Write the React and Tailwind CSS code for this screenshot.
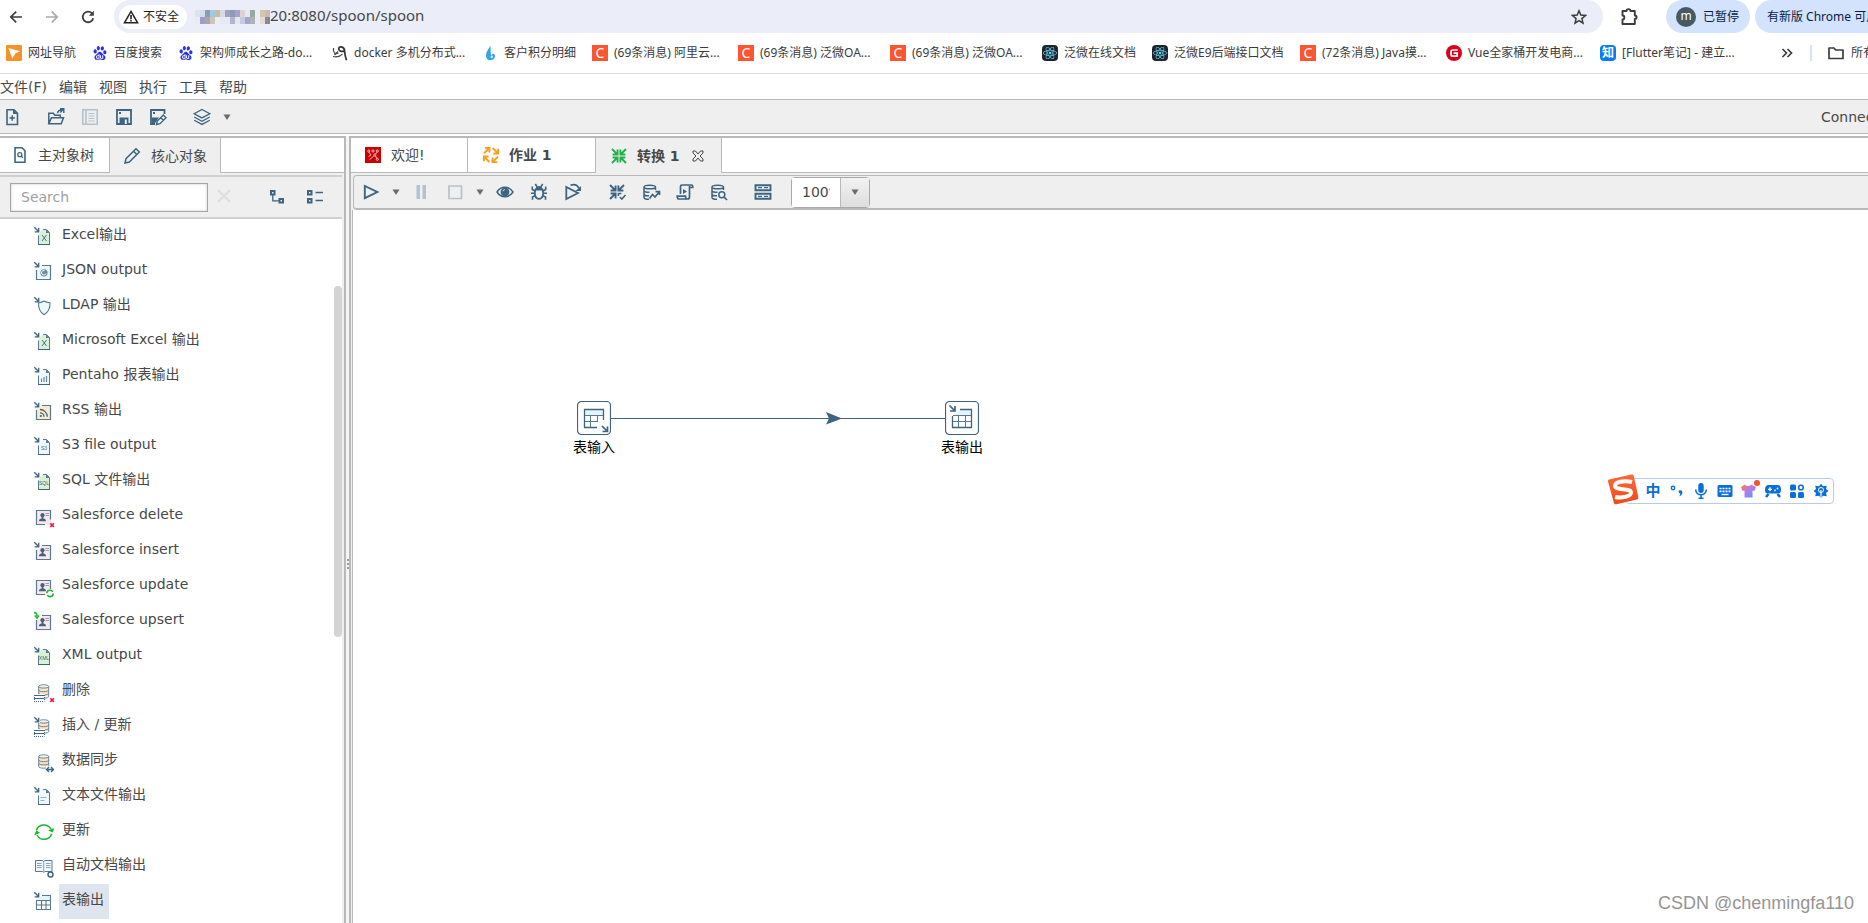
import React from "react";
import { FaReact } from "react-icons/fa";
import { SiBaidu } from "react-icons/si";

const INK = "#3d6480";

/* ---------- browser chrome icons ---------- */

function Svg({ size = 20, box, children, className = "" }) {
  const b = box || size;
  return (
    <svg width={size} height={size} viewBox={`0 0 ${b} ${b}`} fill="none" className={`shrink-0 ${className}`} aria-hidden="true">
      {children}
    </svg>
  );
}

const BackIcon = ({ color = "#3c3c3c", flip }) => (
  <Svg size={16}>
    <g transform={flip ? "translate(16 0) scale(-1 1)" : undefined}>
      <path d="M14 8H3M8.2 2.6 2.8 8l5.4 5.4" stroke={color} strokeWidth="1.7" />
    </g>
  </Svg>
);

const ReloadIcon = () => (
  <Svg size={16}>
    <path d="M13.2 9.2A5.3 5.3 0 1 1 12 4.4" stroke="#3c3c3c" strokeWidth="1.8" />
    <path d="M13.8 1.8v5h-5z" fill="#3c3c3c" />
  </Svg>
);

const WarnIcon = () => (
  <Svg size={16}>
    <path d="M8 2.4 14.6 13.8H1.4z" stroke="#222" strokeWidth="1.5" />
    <path d="M8 6v4.3M8 11v1.6" stroke="#222" strokeWidth="1.6" />
  </Svg>
);

const Arrow = ({ className = "" }) => (
  <Svg size={10} className={className}>
    <path d="M1.5 2.5h7L5 8z" fill="#6b6b6b" />
  </Svg>
);

/* ---------- bookmark icons ---------- */

const NavMark = () => (
  <Svg size={16}>
    <rect width="16" height="16" rx="1" fill="#f6922a" />
    <path d="M2.5 3 14 6.2 9.3 8.4 6.2 13.6z" fill="#fff" />
  </Svg>
);
const PawMark = () => <SiBaidu className="size-4 shrink-0 p-px text-[#2a32e0]" aria-hidden="true" />;
const PenguinMark = () => (
  <Svg size={16}>
    <path d="M1.500 3C1 8 3 9.500 6.500 8" stroke="#444" strokeWidth="1.200" />
    <path d="M12.500 5.500C12 1 6.500.8 6.800 4c.2 2.800 4.500 3 5.700 1.500.3 3 .5 6 2 9.700" stroke="#333" strokeWidth="1.700" />
    <path d="M1 11.500c4 .8 7 .3 9.500-2.300M6 6.500 2.500 10" stroke="#444" strokeWidth="1.200" />
  </Svg>
);
const DropMark = () => (
  <Svg size={16}>
    <path d="M8.500.8C6 4.500 3.800 8 4 11c.2 2.800 2 4.200 4.200 4.200C10.800 15.200 13 13.500 13 11S10 8.500 9.300 10.500C8 7 9 4 8.500.8z" fill="#2fa6e6" />
    <circle cx="9.800" cy="11.800" r="1.200" fill="#d5f0ff" />
  </Svg>
);
const Tile = ({ char, className }) => (
  <span className={`flex size-4 shrink-0 items-center justify-center ${className}`}>{char}</span>
);
const CMark = () => <Tile char="C" className="bg-[#fc5531] text-[14px] leading-4 text-white" />;
const ReactMark = () => (
  <span className="flex size-4 shrink-0 items-center justify-center rounded-sm bg-[#20232a] text-[#61dafb]">
    <FaReact size={14} aria-hidden="true" />
  </span>
);
const GMark = () => (
  <Svg size={16}>
    <circle cx="8" cy="8" r="8" fill="#d9001b" />
    <path d="M11.800 5H7a2 2 0 0 0-2 2v2.200a2 2 0 0 0 2 2h4.200V8.100H7.600" stroke="#fff" strokeWidth="1.700" />
  </Svg>
);
const ZhiMark = () => <Tile char="知" className="rounded-sm bg-[#0a7bf5] text-[12px] leading-4 font-bold text-white" />;

const BOOKMARKS = [
  { label: "网址导航", Icon: NavMark, w: "w-[86px]" },
  { label: "百度搜索", Icon: PawMark, w: "w-[86px]" },
  { label: "架构师成长之路-do...", Icon: PawMark, w: "w-[154px]" },
  { label: "docker 多机分布式...", Icon: PenguinMark, w: "w-[150px]" },
  { label: "客户积分明细", Icon: DropMark, w: "w-[110px]" },
  { label: "(69条消息) 阿里云...", Icon: CMark, w: "w-[146px]" },
  { label: "(69条消息) 泛微OA...", Icon: CMark, w: "w-[152px]" },
  { label: "(69条消息) 泛微OA...", Icon: CMark, w: "w-[152px]" },
  { label: "泛微在线文档", Icon: ReactMark, w: "w-[110px]" },
  { label: "泛微E9后端接口文档", Icon: ReactMark, w: "w-[148px]" },
  { label: "(72条消息) Java摸...", Icon: CMark, w: "w-[146px]" },
  { label: "Vue全家桶开发电商...", Icon: GMark, w: "w-[154px]" },
  { label: "[Flutter笔记] - 建立...", Icon: ZhiMark, w: "w-[150px]" },
];

const MOSAIC = [
  ["#dfe2ec", "#e9ebf3"], ["#cfdff2", "#a29dc6"], ["#8f9bab", "#a9a6ad"], ["#9ccbe3", "#cfc5b6"],
  ["#c9bba6", "#eaedf8"], ["#d8dbe2", "#e6e9f3"], ["#a39fc9", "#e6e9f3"], ["#8f9bb2", "#b1b6c8"],
  ["#a7a3cb", "#e4e6f0"], ["#ded3d3", "#c3cce0"], ["#e6e9f3", "#a7a3cb"], ["#9aa7a2", "#aeb2b4"],
  ["#eaedf8", "#eaedf8"], ["#d6c5ab", "#e6dcd4"], ["#c9b9b9", "#8a8798"],
];

/* ---------- application toolbar icons ---------- */

const NewIcon = () => (
  <Svg>
    <path d="M5 2.800h7l3.500 3.500v11.200H5z" stroke={INK} strokeWidth="1.600" />
    <path d="M11 2.500V7h4.500" fill={INK} />
    <path d="M10.200 8.300v5.400M7.500 11h5.400" stroke={INK} strokeWidth="1.500" />
  </Svg>
);
const OpenIcon = () => (
  <Svg>
    <path d="M2.800 16.700V6.300h4.500l1.500 2h5.500v2.500M2.800 16.700l2.700-6h12l-2.300 6z" stroke={INK} strokeWidth="1.500" />
    <path d="M11.500 6.300c0-2 1.500-3.500 5.500-3.600M14 1.800h3.800V6M17.500 2l-3.300 3.500" stroke={INK} strokeWidth="1.400" />
  </Svg>
);
const ListIcon = () => (
  <Svg>
    <path d="M2.800 2.800h14.400v14.400H2.800zM6 3v14" stroke="#b4c2cd" strokeWidth="1.600" />
    <path d="M8.500 6.500h6M8.500 9h6M8.500 11.500h6M8.500 14h6" stroke="#b4c2cd" strokeWidth="1.200" />
  </Svg>
);
const SaveIcon = () => (
  <Svg>
    <path d="M3 3h14v14H3z" stroke={INK} strokeWidth="1.800" />
    <path d="M5.500 10.500h9V17h-9z" fill={INK} />
    <path d="M10.800 12.500h2V17h-2z" fill="#efefef" />
    <path d="M5 5h2v2H5z" fill={INK} />
  </Svg>
);
const SaveAsIcon = () => (
  <Svg>
    <path d="M16.500 7V3H3v14h4" stroke={INK} strokeWidth="1.800" />
    <path d="M5 5h2v2H5zM4 10.500h7L6.500 17H4z" fill={INK} />
    <path d="M8.500 17.500l.8-3.500 6-6 2.700 2.700-6 6zM12.700 10.600l2.600 2.600" stroke={INK} strokeWidth="1.400" />
  </Svg>
);
const LayersIcon = () => (
  <Svg>
    <path d="M10 2.500 17.800 6.700 10 10.900 2.200 6.700zM2.200 10 10 14.200 17.800 10M2.200 13.200 10 17.400l7.800-4.200" stroke={INK} strokeWidth="1.300" />
  </Svg>
);
const PlayIcon = () => (
  <Svg>
    <path d="M3.800 4v12.200L16.300 10z" stroke={INK} strokeWidth="1.900" />
  </Svg>
);
const PauseIcon = () => (
  <Svg>
    <path d="M5.500 3H9v14H5.500zM11.500 3H15v14h-3.500z" fill="#b4c2cd" />
  </Svg>
);
const StopIcon = () => (
  <Svg>
    <path d="M4 4h12.500v12.500H4z" stroke="#b4c2cd" strokeWidth="1.700" />
  </Svg>
);
const EyeIcon = () => (
  <Svg>
    <path d="M2 10c4-6.300 12-6.300 16 0-4 6.300-12 6.300-16 0z" stroke={INK} strokeWidth="1.500" />
    <circle cx="10" cy="10" r="4.400" fill={INK} />
    <path d="M8 9.200a2 2 0 0 1 1.700-1.600" stroke="#efefef" />
  </Svg>
);
const BugIcon = () => (
  <Svg>
    <path d="M6.500 7.500h7c1.500 4 .5 9.300-3.500 9.300S5 11.500 6.500 7.500z" stroke={INK} strokeWidth="1.800" />
    <path d="M6.500 7.500a3.500 3.500 0 0 1 7 0z" fill={INK} />
    <path d="M6.300 2l1.800 2.800M13.700 2l-1.800 2.800M6 9 3.300 7.500V4.500M14 9l2.700-1.500V4.500M5.500 11.200H2M14.500 11.200H18M6 13.800l-2.500 1.200v2.700M14 13.800l2.500 1.200v2.700" stroke={INK} strokeWidth="1.600" />
  </Svg>
);
const ReplayIcon = () => (
  <Svg>
    <path d="M3.300 5v12L15 11z" stroke={INK} strokeWidth="1.800" />
    <path d="M7.500 3.300c4-1.500 7 0 8.300 3" stroke={INK} strokeWidth="1.600" />
    <path d="M18 4v5h-5.500z" fill={INK} />
  </Svg>
);
const InArrows = ({ color, check }) => (
  <Svg>
    <path d="M3 3l5 5M8.600 3.500v5H3.600M17 3l-5 5M11.400 3.500v5h5M3 17l5-5M8.600 16.500v-5H3.600" stroke={color} strokeWidth="1.900" />
    {check ? (
      <path d="M11.400 14v-2.500h3M12.800 15l2 2 3.700-4" stroke={color} strokeWidth="1.600" />
    ) : (
      <path d="M17 17l-5-5M11.400 16.500v-5h5" stroke={color} strokeWidth="1.900" />
    )}
  </Svg>
);
const CycleArrows = () => (
  <Svg>
    {[0, 90, 180, 270].map((a) => (
      <path key={a} transform={`rotate(${a} 10 10)`} d="M3 8.300l4.800-4.800M3.800 2.900h4.700v4.700" stroke="#fa9a1f" strokeWidth="1.900" />
    ))}
  </Svg>
);
const Cyl = () => (
  <path d="M14.500 8V5c0-1-2.500-1.800-5.800-1.800S3 4 3 5v10.500c0 1 2 1.800 5 1.800M3 5c0 1 2.500 1.800 5.700 1.800S14.500 6 14.500 5M3 8.500c0 1 2.500 1.800 5.500 1.800M3 12c0 1 2 1.800 5 1.800" stroke={INK} strokeWidth="1.500" />
);
const ImpactIcon = () => (
  <Svg>
    <Cyl />
    <path d="M8.500 16.500l3-4 2.500 2.500 4-4.700M14.500 9.700h4V13" stroke={INK} strokeWidth="1.700" />
  </Svg>
);
const ScriptIcon = () => (
  <Svg>
    <path d="M5.500 12V4.500c0-1 .5-1.500 1.500-1.500h9.500c1 0 1.300.8 1.300 2.500h-3.300M14.500 4v11c0 1-.6 2-2 2H4c-1.300 0-1.800-1-1.800-2.800h8.300c0 2 .5 2.800 1.800 2.800" stroke={INK} strokeWidth="1.700" />
    <path d="M8 7v5l4-2.500z" fill={INK} />
  </Svg>
);
const ExploreIcon = () => (
  <Svg>
    <Cyl />
    <circle cx="12.800" cy="12.800" r="3" stroke={INK} strokeWidth="1.500" />
    <path d="M15 15l3 3" stroke={INK} strokeWidth="1.700" />
  </Svg>
);
const ResultsIcon = () => (
  <Svg>
    <path d="M2.500 3.200h15v5h-15zM2.500 11.800h15v5h-15z" stroke={INK} strokeWidth="1.900" />
    <path d="M5 5.700h4M11 5.700h4M5 14.300h4M11 14.300h4" stroke={INK} strokeWidth="1.200" />
  </Svg>
);
const TreeFileIcon = () => (
  <Svg>
    <path d="M5 2.800h7l3 3v11.400H5z" stroke={INK} strokeWidth="1.600" />
    <circle cx="9.800" cy="9.700" r="2" stroke={INK} strokeWidth="1.300" />
    <path d="M11.300 11l1.500 1.800" stroke={INK} strokeWidth="1.300" />
  </Svg>
);
const PencilIcon = () => (
  <Svg>
    <path d="M3 17l1-4.300L14 2.700l3.300 3.300-10 10zM11.500 5.200l3.300 3.300" stroke={INK} strokeWidth="1.500" />
  </Svg>
);
const ExpandIcon = () => (
  <Svg>
    <path d="M4 4h3.500v3.500H4zM12.500 12H16v3.500h-3.500z" stroke={INK} strokeWidth="2" />
    <path d="M5.800 8v5.800H12" stroke={INK} strokeWidth="1.300" />
  </Svg>
);
const CollapseIcon = () => (
  <Svg>
    <path d="M3 4h3.500v3.500H3zM3 12h3.500v3.500H3z" stroke={INK} strokeWidth="2" />
    <path d="M10.500 5.500H18M10.500 13.500H18" stroke={INK} strokeWidth="1.500" />
  </Svg>
);
const WelcomeIcon = () => (
  <Svg size={16}>
    <rect width="16" height="16" fill="#cc0000" />
    <g stroke="#fff" strokeWidth=".8" opacity=".9">
      <circle cx="3.800" cy="4" r="1.100" /><circle cx="8" cy="4" r="1.100" /><circle cx="12.300" cy="4" r="1.100" />
      <circle cx="9.800" cy="8" r="1.100" /><circle cx="12.300" cy="12.300" r="1.100" />
      <path d="M12 5.200 10.600 7M8.900 8.800 4.500 12.800M10.500 9l1.200 2.200M4 5.200 6 8l-2.500 1.500" />
    </g>
  </Svg>
);

/* ---------- step icons ---------- */

const InArrow = ({ color = INK }) => (
  <path d="M1.300 1.300l4 4M5.700 1.800v4h-4" stroke={color} strokeWidth="1.300" />
);
const Doc = ({ fill = "#eef8fd" }) => (
  <>
    <path d="M8.500 4h5L17 7.500V19H5V9.500z" fill={fill} />
    <path d="M10 3.500h3.500l3 3v12h-11V9.500" stroke="#58798f" />
    <path d="M5 18.500h12" stroke={INK} />
    <path d="M13 3.500V7h3.500" fill="#58798f" />
  </>
);
const Square = ({ fill = "#eef8fd" }) => (
  <>
    <path d="M9 4.500h9V19H3.500V9z" fill={fill} />
    <path d="M9 4.500h8.500v14h-14V9" stroke="#58798f" strokeWidth="1.200" />
  </>
);
const Person = ({ full }) => (
  <>
    <path d={full ? "M4 5h14v14H4z" : "M9 5h9v14H4V9z"} fill="#fce6ea" />
    <path d={full ? "M12 18.500H3.500v-14h14v9" : "M9 4.500h8.500v14h-14V9"} stroke="#58798f" strokeWidth="1.200" />
    <circle cx="9.500" cy="9.200" r="2.100" fill={INK} />
    <path d="M8.600 10h1.800v2.500c1.600.3 2.600.8 2.600 2.800H6c0-2 1-2.500 2.600-2.800z" fill={INK} />
    <path d="M12.500 7.500h3.500M12.500 9.500h3.500" stroke="#8aa1b3" />
  </>
);
const DocText = ({ children }) => (
  <text x="11" y="13.500" textAnchor="middle" fontSize="5" fontFamily="Liberation Sans, sans-serif" fill={INK}>{children}</text>
);
const RedX = () => <path d="M17.300 17.300l3.600 3.600M20.900 17.300l-3.600 3.600" stroke="#e5193c" strokeWidth="1.600" />;
const MiniCyl = () => (
  <>
    <path d="M6 5.500h9.500v10H6z" fill="#fbe3c0" />
    <path d="M5.700 5.500v10c0 1 2.200 1.700 5 1.700s5-.7 5-1.700v-10M5.700 5.500c0-1 2.200-1.700 5-1.700s5 .7 5 1.700-2.200 1.600-5 1.600-5-.6-5-1.600zM5.700 9c0 1 2.200 1.700 5 1.700s5-.7 5-1.700M5.700 12.200c0 1 2.200 1.700 5 1.700s5-.7 5-1.700" stroke="#6b8599" />
  </>
);
const Rows = () => (
  <>
    <path d="M1 13h11v8H1z" fill="#fff" />
    <path d="M1 14.500h10.500M1 17.500h10.500" stroke={INK} strokeWidth="1.200" />
    <path d="M1.500 14v6M1 20.500h10.500M11.500 14v6" stroke={INK} strokeDasharray="1 1" />
  </>
);
const Grid = () => (
  <>
    <path d="M8 5h9.500v4H4z" fill="#e4f4fb" />
    <path d="M9 4.500h8.500v14h-14V9.500h14M3.500 14h14M8.500 9v9.500M13 9v9.500" stroke="#58798f" strokeWidth="1.100" />
  </>
);

const STEPS = [
  { label: "Excel输出", art: <><InArrow /><Doc fill="#d9f2d6" /><path d="M9 9l4.500 6M13.500 9 9 15" stroke={INK} strokeWidth=".9" /></> },
  { label: "JSON output", art: <><InArrow /><Square /><circle cx="11" cy="11.800" r="3.600" fill={INK} opacity=".75" /><path d="M11.500 9.500a2.300 2.300 0 1 0 1.500 3" stroke="#fff" /></> },
  { label: "LDAP 输出", art: <><InArrow /><path d="M5.500 7C8 6.500 9.500 6 11 5c1.500 1 3.500 1.500 6 1.700.3 5.300-1.500 9.300-6 12-4-2.300-5.600-6-5.500-11.700z" fill="#eef8fd" stroke="#58798f" strokeWidth="1.100" /></> },
  { label: "Microsoft Excel 输出", art: <><InArrow /><Doc fill="#d9f2d6" /><path d="M9 9l4.500 6M13.500 9 9 15" stroke={INK} strokeWidth=".9" /></> },
  { label: "Pentaho 报表输出", art: <><InArrow /><Doc /><path d="M8.500 12.500V16M11 11v5M13.500 10v6" stroke="#6b8ba2" strokeWidth="1.200" /></> },
  { label: "RSS 输出", art: <><InArrow /><Square fill="#fdeacb" /><path d="M7 11.800a4 4 0 0 1 4 4M7 8.500a7.300 7.300 0 0 1 7.300 7.300" stroke={INK} strokeWidth="1.300" /><circle cx="7.800" cy="15" r="1.100" fill={INK} /></> },
  { label: "S3 file output", art: <><InArrow /><Doc /><DocText>S3</DocText></> },
  { label: "SQL 文件输出", art: <><InArrow /><Doc fill="#d9f2d6" /><DocText>SQL</DocText></> },
  { label: "Salesforce delete", art: <><Person full /><RedX /></> },
  { label: "Salesforce insert", art: <><InArrow /><Person /></> },
  { label: "Salesforce update", art: <><Person full /><circle cx="17" cy="17.500" r="4.500" fill="#fff" /><circle cx="17" cy="17.500" r="3.200" stroke="#19b52a" strokeWidth="1.500" strokeDasharray="8 2" /></> },
  { label: "Salesforce upsert", art: <><Person /><path d="M1 1.500c2.500 0 3 1 3 3.500M1.800 4.500 4 7l2-2.500" stroke="#19b52a" strokeWidth="1.500" /></> },
  { label: "XML output", art: <><InArrow /><Doc fill="#d9f2d6" /><DocText>XML</DocText></> },
  { label: "删除", art: <><MiniCyl /><Rows /><RedX /></> },
  { label: "插入 / 更新", art: <><MiniCyl /><path d="M0 0h7v7H0z" fill="#fff" /><InArrow /><Rows /></> },
  { label: "数据同步", art: <><MiniCyl /><path d="M13 15h8v5h-8z" fill="#fff" /><path d="M13.500 18.500h7M16 16l-2.500 2.500L16 21M18 16l2.500 2.500L18 21" stroke={INK} strokeWidth="1.300" /></> },
  { label: "文本文件输出", art: <><InArrow /><Doc /><path d="M7.500 11.500h6M7.500 14.500h4" stroke="#8fb3c9" /></> },
  { label: "更新", art: <><path d="M3.300 9.500a8 8 0 0 1 14.600-1.300M18.700 12.800A8 8 0 0 1 4 14" stroke="#19b52a" strokeWidth="1.500" /><path d="M15 9.500l6-2.500-1 4.500zM7 11.800 1 14.500l2.500-5z" fill="#19b52a" /></> },
  { label: "自动文档输出", art: <><path d="M2.500 4.500h7.200l1 1 1-1h7.300v11h-7.300l-1 1-1-1H2.500z" fill="#eef8fd" stroke="#58798f" /><path d="M10.700 5v11M4 7.500h4.500M4 9.500h4.500M4 11.500h4.500M13 7.500h4.500M13 9.500h4.500M13 11.500h4.500" stroke="#7f9bb0" strokeWidth=".9" /><circle cx="17.500" cy="18.500" r="2.500" fill="#fff" stroke={INK} strokeWidth="1.400" /></> },
  { label: "表输出", art: <><InArrow /><Grid /></>, selected: true },
];

/* ---------- parts ---------- */

function ToolButton({ label, children, className = "", disabled }) {
  return (
    <button type="button" aria-label={label} disabled={disabled} className={`flex shrink-0 items-center justify-center ${className}`}>
      {children}
    </button>
  );
}

function AddressBar() {
  return (
    <div className="flex h-[33px] shrink-0 items-center bg-white">
      <div className="flex w-[114px] shrink-0 items-center gap-5 pl-2">
        <ToolButton label="后退"><BackIcon /></ToolButton>
        <ToolButton label="前进"><BackIcon color="#a9a9a9" flip /></ToolButton>
        <ToolButton label="重新加载"><ReloadIcon /></ToolButton>
      </div>
      <div className="flex h-full min-w-0 flex-1 items-center rounded-2xl bg-[#ebeef8] pr-4 pl-[5px]">
        <button type="button" className="flex h-6 w-[68px] shrink-0 items-center gap-1 rounded-full bg-white pl-1 text-[12px] text-[#1f1f1f]">
          <WarnIcon />不安全
        </button>
        <span className="ml-2 flex h-[14px] shrink-0" aria-hidden="true">
          {MOSAIC.map(([a, b], i) => (
            <span key={i} className="flex w-[5px] flex-col">
              <span className="flex-1" style={{ background: a }} />
              <span className="flex-1" style={{ background: b }} />
            </span>
          ))}
        </span>
        <span className="flex-1 truncate pb-[3px] text-[15px] text-[#46474a]">20:8080/spoon/spoon</span>
        <ToolButton label="为此标签页添加书签">
          <Svg size={16}>
            <path d="M8 1.800l1.800 4.300 4.700.4-3.600 3.100 1.100 4.600L8 11.700l-4 2.500 1.100-4.600L1.500 6.500l4.700-.4z" stroke="#3c3c3c" strokeWidth="1.500" />
          </Svg>
        </ToolButton>
      </div>
      <div className="flex h-full w-[265px] shrink-0 items-center overflow-hidden">
        <ToolButton label="扩展程序" className="ml-4">
          <Svg>
            <path d="M3.500 4h4c0-2.500 4-2.500 4 0h4.300v4.500c2.400 0 2.400 3.500 0 3.500v5H3.500v-4.500c2.500 0 2.500-4 0-4z" stroke="#3c3c3c" strokeWidth="1.900" strokeLinejoin="round" />
          </Svg>
        </ToolButton>
        <span className="ml-[17px] h-4 w-[2px] bg-[#d3e2fd]" />
        <button type="button" className="ml-[10px] flex h-full w-[84px] shrink-0 items-center gap-[7px] rounded-full bg-[#d3e2fd] pl-[10px] text-[12px] text-[#041e49]">
          <span className="flex size-5 items-center justify-center rounded-full bg-[#455a64] pb-px text-[12px] text-white">m</span>
          已暂停
        </button>
        <button type="button" className="ml-[5px] flex h-full w-40 shrink-0 items-center rounded-full bg-[#d3e2fd] pl-3 text-[12px] whitespace-nowrap text-[#041e49]">
          有新版 Chrome 可用
        </button>
      </div>
    </div>
  );
}

function BookmarkBar() {
  return (
    <nav className="flex h-[41px] shrink-0 items-center overflow-hidden border-b border-[#dcdcdc] bg-white pl-[6px] text-[12px] text-[#3b3b3b]">
      {BOOKMARKS.map(({ label, Icon, w }, i) => (
        <a key={i} href="#" className={`flex shrink-0 items-center gap-[6px] whitespace-nowrap ${w}`}>
          <Icon />{label}
        </a>
      ))}
      <div className="flex-1" />
      <div className="flex w-[91px] shrink-0 items-center">
        <ToolButton label="更多书签" className="ml-[2px]">
          <Svg size={16}><path d="M3.500 4l4 4-4 4M8.500 4l4 4-4 4" stroke="#3c3c3c" strokeWidth="1.700" /></Svg>
        </ToolButton>
        <span className="ml-[15px] h-4 w-[2px] shrink-0 bg-[#d3e2fd]" />
        <a href="#" className="ml-4 flex shrink-0 items-center gap-[7px] whitespace-nowrap">
          <Svg size={16}><path d="M1 3h5l1.700 2H15v8.500H1z" stroke="#3c3c3c" strokeWidth="1.700" strokeLinejoin="round" /></Svg>
          所有书签
        </a>
      </div>
    </nav>
  );
}

function MainToolbar() {
  return (
    <div className="flex h-[35px] shrink-0 items-center overflow-hidden border-y border-[#b9b9b9] bg-[#efefef]">
      <ToolButton label="新建" className="ml-[2px]"><NewIcon /></ToolButton>
      <ToolButton label="打开" className="ml-6"><OpenIcon /></ToolButton>
      <ToolButton label="探索资源库" className="ml-[14px]" disabled><ListIcon /></ToolButton>
      <ToolButton label="保存" className="ml-[14px]"><SaveIcon /></ToolButton>
      <ToolButton label="另存为" className="ml-[14px]"><SaveAsIcon /></ToolButton>
      <ToolButton label="视角" className="ml-6"><LayersIcon /></ToolButton>
      <ToolButton label="选择视角" className="ml-[10px]"><Arrow /></ToolButton>
      <div className="flex-1" />
      <span className="w-[47px] shrink-0 whitespace-nowrap">Connect</span>
    </div>
  );
}

function LeftPanel() {
  return (
    <aside className="flex w-[346px] shrink-0 flex-col border-t-2 border-r-2 border-[#b9b9b9] bg-[#efefef]">
      <div className="flex h-[35px] shrink-0" role="tablist">
        <button type="button" role="tab" aria-selected="false" className="flex w-[110px] items-center gap-2 border-r border-b border-[#b9b9b9] bg-white pl-[10px]">
          <TreeFileIcon />主对象树
        </button>
        <button type="button" role="tab" aria-selected="true" className="flex w-[111px] items-center gap-[9px] border-r border-[#b9b9b9] pl-[12px]">
          <PencilIcon />核心对象
        </button>
        <div className="flex-1 border-b border-[#b9b9b9] bg-white" />
      </div>
      <div className="mt-[2px] mr-[2px] flex h-[44px] shrink-0 items-center border-y-2 border-[#d0d0d0] pl-[10px]">
        <input aria-label="Search" placeholder="Search" className="h-[29px] w-[198px] border border-[#a5a5a5] bg-white px-[10px] shadow-[inset_0_0_3px_#ccc] outline-none placeholder:text-[#a0a0a0]" />
        <ToolButton label="清除" className="ml-[6px]">
          <Svg><path d="M4 3l12 12M16 3 4 15" stroke="#dedede" strokeWidth="2" /></Svg>
        </ToolButton>
        <ToolButton label="展开全部" className="ml-[33px]"><ExpandIcon /></ToolButton>
        <ToolButton label="折叠全部" className="ml-[18px]"><CollapseIcon /></ToolButton>
      </div>
      <div className="flex min-h-0 flex-1">
        <ul className="min-w-0 flex-1 overflow-hidden bg-white">
          {STEPS.map(({ label, art, selected }) => (
            <li key={label} className="flex h-[35px] items-start pl-[33px]">
              <Svg size={22} className="mt-[7px]">{art}</Svg>
              <button type="button" className={`ml-1 h-[35px] pr-[5px] pb-[6px] pl-[3px] whitespace-nowrap ${selected ? "bg-[#dee5ee]" : ""}`}>{label}</button>
            </li>
          ))}
        </ul>
        <div className="w-2 shrink-0 bg-white pt-[67px]">
          <div className="h-[351px] rounded-full bg-[#d4d4d4]" />
        </div>
        <div className="w-[2px] shrink-0" />
      </div>
    </aside>
  );
}

function Combo() {
  return (
    <div className="ml-[18px] flex h-[31px] w-[79px] rounded-sm border border-[#a9a9a9]">
      <input aria-label="缩放" defaultValue="100%" className="w-[38px] min-w-0 bg-white pl-[10px] outline-none" />
      <span className="w-[10px] bg-white" />
      <button type="button" aria-label="选择缩放比例" className="flex flex-1 items-center justify-center border-l border-[#b9b9b9] bg-gradient-to-b from-[#f2f2f2] to-[#dedede]"><Arrow /></button>
    </div>
  );
}

function TransToolbar() {
  return (
    <div className="mt-[2px] ml-[2px] flex h-[35px] shrink-0 items-center overflow-hidden rounded-l-sm border-t border-b-2 border-l border-[#b9b9b9]">
      <ToolButton label="运行" className="ml-[7px]"><PlayIcon /></ToolButton>
      <ToolButton label="运行选项" className="ml-[10px]"><Arrow /></ToolButton>
      <ToolButton label="暂停" className="ml-[10px]" disabled><PauseIcon /></ToolButton>
      <ToolButton label="停止" className="ml-[14px]" disabled><StopIcon /></ToolButton>
      <ToolButton label="停止选项" className="ml-[10px]"><Arrow /></ToolButton>
      <ToolButton label="预览" className="ml-[10px]"><EyeIcon /></ToolButton>
      <ToolButton label="调试" className="ml-[14px]"><BugIcon /></ToolButton>
      <ToolButton label="重放" className="ml-[14px]"><ReplayIcon /></ToolButton>
      <ToolButton label="校验" className="ml-6"><InArrows color={INK} check /></ToolButton>
      <ToolButton label="影响分析" className="ml-[14px]"><ImpactIcon /></ToolButton>
      <ToolButton label="SQL" className="ml-[14px]"><ScriptIcon /></ToolButton>
      <ToolButton label="探索数据库" className="ml-[14px]"><ExploreIcon /></ToolButton>
      <ToolButton label="执行结果" className="ml-6"><ResultsIcon /></ToolButton>
      <Combo />
    </div>
  );
}

function Node({ label, out, className }) {
  return (
    <div className={`absolute flex w-[50px] flex-col items-center text-black ${className}`}>
      <svg width="34" height="34" viewBox="0 0 34 34" fill="none" aria-hidden="true">
        <rect x=".5" y=".5" width="33" height="33" rx="4" fill="#fff" stroke={INK} strokeWidth="1.200" />
        {out ? (
          <>
            <path d="M15 9h11v5H9z" fill="#e4f4fb" />
            <path d="M15 8.500h11.500v18h-19V15" stroke={INK} strokeWidth="1.300" />
            <path d="M8 14.500h18M8 20.500h18M13.500 14.500V26M20.500 14.500V26" stroke="#58798f" />
            <path d="M4.500 4.500l5 5M10 5v5H5" stroke={INK} strokeWidth="1.700" />
          </>
        ) : (
          <>
            <path d="M8 9h18v5H8z" fill="#e4f4fb" />
            <path d="M26.500 19V8.500h-19v18H20" stroke={INK} strokeWidth="1.300" />
            <path d="M8 14.500h18M8 20.500h13M13.500 14.500V26M20.500 14.500V21" stroke="#58798f" />
            <path d="M25 25l5 5M30.500 25.500v5h-5" stroke={INK} strokeWidth="1.700" />
          </>
        )}
      </svg>
      <span className="mt-[2px] leading-5">{label}</span>
    </div>
  );
}

function Workspace() {
  return (
    <main className="flex min-w-0 flex-1 flex-col border-t-2 border-l-2 border-[#b9b9b9] bg-[#efefef]">
      <div className="flex h-[35px] shrink-0" role="tablist">
        <button type="button" role="tab" aria-selected="false" className="flex w-[117px] items-center gap-[10px] border-r border-b border-[#b9b9b9] bg-white pl-[14px]">
          <WelcomeIcon />欢迎!
        </button>
        <button type="button" role="tab" aria-selected="false" className="flex w-[128px] items-center gap-2 border-r border-b border-[#b9b9b9] bg-white pl-[13px] font-bold">
          <CycleArrows />作业 1
        </button>
        <div className="flex w-[126px] items-center border-r border-[#b9b9b9] pl-[13px]">
          <button type="button" role="tab" aria-selected="true" className="flex items-center gap-2 font-bold">
            <InArrows color="#1fb14c" />转换 1
          </button>
          <button type="button" aria-label="关闭" className="ml-3">
            <Svg size={12}>
              <path d="M1 1h2.500L6 4l2.500-3H11v2L8 6l3 3v2H8.500L6 8l-2.500 3H1V9l3-3-3-3z" stroke="#444" />
            </Svg>
          </button>
        </div>
        <div className="flex-1 border-b border-[#b9b9b9] bg-white" />
      </div>
      <TransToolbar />
      <div className="relative ml-px min-h-0 flex-1 border-l border-[#b9b9b9] bg-white">
        <svg className="absolute top-[198px] left-[258px]" width="334" height="20" viewBox="0 0 334 20" aria-hidden="true">
          <path d="M0 10.500h334" stroke={INK} strokeWidth="1" />
          <path d="M215 4l16 6.500-16 6 3-6z" fill={INK} />
        </svg>
        <Node label="表输入" className="top-[191px] left-[216px]" />
        <Node label="表输出" out className="top-[191px] left-[584px]" />
      </div>
    </main>
  );
}

const BLUE = "#0a6fd8";

function ImeBar() {
  return (
    <div className="absolute top-[474px] right-[34px] flex items-center">
      <div className="mt-[4px] flex h-[26px] w-[209px] items-center justify-between rounded-sm border border-[#b9cbe8] bg-white pr-[4px] pl-[19px]">
        <span className="w-4 text-center text-[15px] leading-4 font-bold text-[#0a6fd8]">中</span>
        <Svg size={16}><circle cx="4" cy="5" r="1.700" stroke={BLUE} strokeWidth="1.400" /><path d="M10 7.500c2.500-1 4 .5 3.300 3-.4 1.500-1.600 2.500-3 2.700l1.200-2.500C10 10.500 9 8.500 10 7.500z" fill={BLUE} /></Svg>
        <Svg size={16}><rect x="5.300" y="0" width="5.400" height="10" rx="2.700" fill={BLUE} /><path d="M2.700 6.500c0 7 10.600 7 10.600 0M8 12v3M5.500 15.200h5" stroke={BLUE} strokeWidth="1.600" /></Svg>
        <Svg size={16}><rect x=".5" y="2" width="15" height="12" rx="1.500" fill={BLUE} /><path d="M2.500 5.500h11M2.500 8.300h11" stroke="#fff" strokeWidth="1.700" strokeDasharray="2 1" /><path d="M4.500 11.500h7" stroke="#fff" strokeWidth="1.400" /></Svg>
        <Svg size={16}>
          <defs><linearGradient id="shirt" x1="0" y1="0" x2="1" y2="1"><stop offset="0" stopColor="#ff7a45" /><stop offset=".5" stopColor="#b37bf0" /><stop offset="1" stopColor="#3fa0ff" /></linearGradient></defs>
          <path d="M0 4l4-2.500c1 2 5 2 6 0L15 4l-1.500 4-2-.5V14.500H3.500V7.500l-2 .5z" fill="url(#shirt)" />
        </Svg>
        <Svg size={16}><path d="M4 2h8c3 0 4 2 4 5s-1.500 3.500-4 3.500H4C1.500 10.500 0 10 0 7s1-5 4-5z" fill={BLUE} /><path d="M3.500 11 1 14M12.500 11l2.500 3" stroke={BLUE} strokeWidth="2.600" /><path d="M3 6.300h4M5 4.300v4" stroke="#fff" strokeWidth="1.300" /><circle cx="10" cy="7.300" r=".9" fill="#fff" /><circle cx="12.500" cy="5.500" r=".9" fill="#fff" /></Svg>
        <Svg size={16}><rect x="1" y="1.500" width="6" height="6" rx="1.500" fill={BLUE} /><rect x="9.700" y="2.300" width="4.500" height="4.500" rx="2" stroke={BLUE} strokeWidth="1.600" /><rect x="1" y="9" width="6" height="6" rx="1.500" fill={BLUE} /><rect x="9" y="9" width="6" height="6" rx="1.500" fill={BLUE} /></Svg>
        <Svg size={16}><path d="M8 .8l2 2.400 3.800-.4-.8 3.200 2.500 2-2.500 2 .8 3.200-3.800-.4L8 15.200l-2-2.400-3.800.4.8-3.200L.5 8 3 6l-.8-3.200 3.800.4z" fill={BLUE} /><circle cx="8" cy="7" r="2.500" stroke="#fff" /><path d="M8 7v8" stroke="#fff" strokeWidth="1.200" /></Svg>
      </div>
      <span className="absolute top-[6px] right-[74px] size-[6px] rounded-full bg-[#fb4f2d]" />
      <svg className="absolute top-0 left-[-18px]" width="32" height="31" viewBox="0 0 32 31" fill="none" aria-hidden="true">
        <defs><linearGradient id="sogou" x1="0" y1="0" x2="0" y2="1"><stop offset="0" stopColor="#ff6a3a" /><stop offset="1" stopColor="#ee4a15" /></linearGradient></defs>
        <path d="M3 5.200 24.500.5c1.300-.3 2 .3 2.300 1.500l4.500 21c.3 1.300-.3 2.300-1.500 2.600L9.500 30.200c-1.300.3-2.300-.3-2.600-1.500L1 7.500c-.3-1.200.7-2 2-2.300z" fill="url(#sogou)" />
        <path d="M25 8C17 6 7.500 8 8 12.300c.4 4.200 15.500 1.500 16 6 .4 4.300-9 6-16 4.700" stroke="#fff" strokeWidth="4" />
      </svg>
    </div>
  );
}

export default function App() {
  return (
    <div className="relative flex h-screen flex-col overflow-hidden bg-white font-['DejaVu_Sans','Noto_Sans_CJK_SC',sans-serif] text-[14px] leading-5 text-[#484848]">
      <div className="flex shrink-0 flex-col font-['Noto_Sans','Noto_Sans_CJK_SC',sans-serif]">
        <AddressBar />
        <BookmarkBar />
      </div>
      <nav className="flex h-[25px] shrink-0 items-center gap-3">
        {["文件(F)", "编辑", "视图", "执行", "工具", "帮助"].map((m) => (
          <button key={m} type="button">{m}</button>
        ))}
      </nav>
      <MainToolbar />
      <div className="flex min-h-0 flex-1 pt-[2px]">
        <LeftPanel />
        <div className="flex w-[3px] shrink-0 flex-col items-center justify-center gap-[2px] bg-[#f5f5f5] pt-[68px]">
          <span className="size-[2px] bg-[#999]" />
          <span className="size-[2px] bg-[#999]" />
          <span className="size-[2px] bg-[#999]" />
        </div>
        <Workspace />
      </div>
      <ImeBar />
      <p className="absolute right-[14px] bottom-2 font-['Liberation_Sans',sans-serif] text-[18px] leading-6 text-[#959595]">CSDN @chenmingfa110</p>
    </div>
  );
}
